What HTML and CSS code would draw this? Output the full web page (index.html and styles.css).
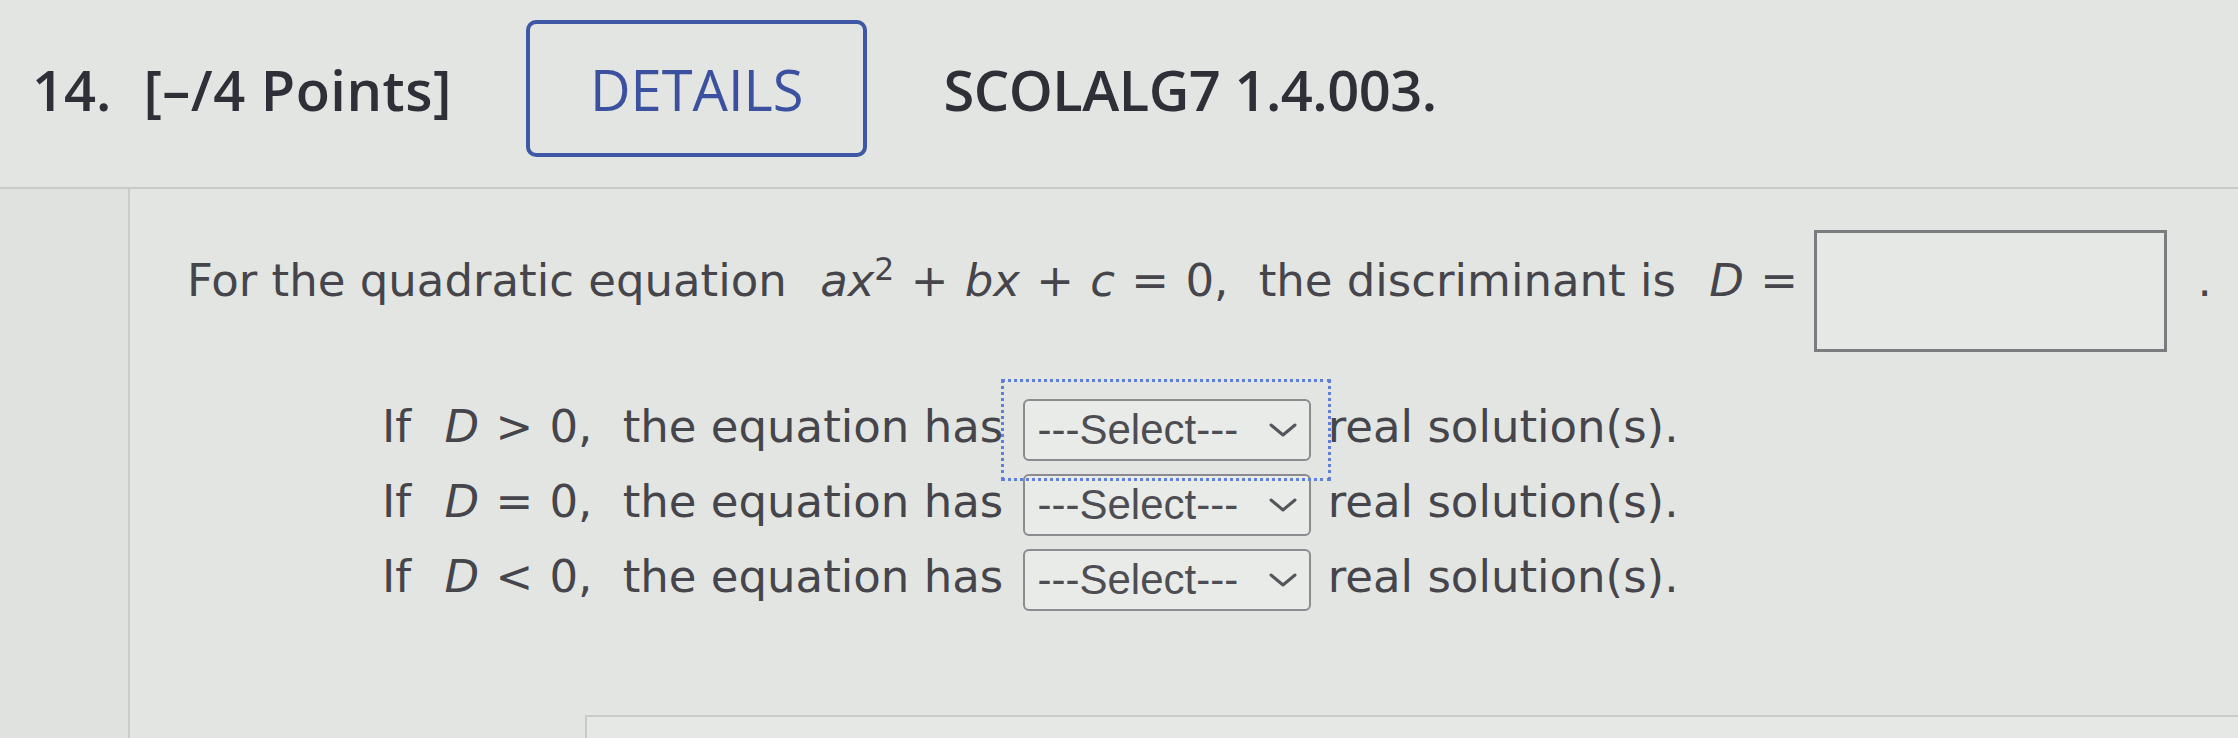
FILE: index.html
```html
<!DOCTYPE html>
<html>
	<head>
		<meta charset="utf-8">
		<title>SCOLALG7 1.4.003</title>
		<link rel="stylesheet" href="styles.css">
	</head>
	<body>
		<div class="question">
			<div class="qHead">
				<span class="qNum">14.</span>
				<span class="qPoints">[–/4 Points]</span>
				<button class="details" type="button">DETAILS</button>
				<span class="qCode">SCOLALG7 1.4.003.</span>
			</div>
			<div class="qBody">
				<div class="gutter"></div>
				<div class="qContent">
					<p class="lead">
						For the quadratic equation
						<span class="math"><i>a</i><i>x</i><sup>2</sup> <span class="op">+</span> <i>b</i><i>x</i> <span class="op">+</span> <i>c</i> <span class="op">=</span> 0,</span>
						the discriminant is
						<span class="math tail"><i>D</i> <span class="op">=</span></span>
						<span class="answer"></span>
						<span class="dot">.</span>
					</p>
					<ul class="cases">
						<li>
							If <span class="math"><i>D</i> <span class="op">&gt;</span> 0,</span> the equation has
							<span class="select focused">---Select--- <svg viewBox="0 0 28 14" width="28" height="14"><polyline points="2,2 14,12 26,2" /></svg></span>
							real solution(s).
						</li>
						<li>
							If <span class="math"><i>D</i> <span class="op">=</span> 0,</span> the equation has
							<span class="select">---Select--- <svg viewBox="0 0 28 14" width="28" height="14"><polyline points="2,2 14,12 26,2" /></svg></span>
							real solution(s).
						</li>
						<li>
							If <span class="math"><i>D</i> <span class="op">&lt;</span> 0,</span> the equation has
							<span class="select">---Select--- <svg viewBox="0 0 28 14" width="28" height="14"><polyline points="2,2 14,12 26,2" /></svg></span>
							real solution(s).
						</li>
					</ul>
					<div class="nextPart"></div>
				</div>
			</div>
		</div>
	</body>
</html>
```

FILE: styles.css
```css
* {
	margin: 0;
	padding: 0;
}

ul,
li {
	list-style: none;
}

html,
body {
	height: 100%;
	overflow: hidden;
}

body {
	background-color: #e3e5e2;
	font-family: "DejaVu Sans", Verdana, sans-serif;
	color: #45454b;
}

/* header row */
.qHead {
	display: flex;
	align-items: center;
	padding: 20px 0 30px 32px;
	border-bottom: 2px solid #c9cbc8;
	font-family: "Open Sans", "Noto Sans", sans-serif;
	font-size: 56px;
	font-weight: 600;
	color: #2f2f37;
}

.qHead .qNum {
	margin-right: 32px;
}

.qHead .qPoints {
	letter-spacing: 0.5px;
}

.qHead .details {
	box-sizing: border-box;
	height: 137px;
	margin: 0 76px 0 74px;
	padding: 0 60px;
	border: 4px solid #3e58a6;
	border-radius: 10px;
	background-color: transparent;
	font-family: "Open Sans", "Noto Sans", sans-serif;
	font-size: 56px;
	font-weight: 500;
	color: #3b51a0;
}

.qHead .qCode {
	letter-spacing: -0.5px;
}

/* body */
.qBody {
	display: flex;
	height: 560px;
}

.qBody .gutter {
	width: 128px;
	border-right: 2px solid #c9cbc8;
	background-color: #e0e2df;
}

.qBody .qContent {
	flex: 1;
	padding-left: 57px;
	font-size: 45px;
}

.math {
	margin: 0 16px 0 19px;
	font-style: normal;
}

.math.tail {
	margin-right: 0;
}

.math i {
	font-style: oblique;
}

.math .op {
	margin: 0 2px;
}

.math sup {
	font-size: 0.7em;
	line-height: 0;
	vertical-align: 0.5em;
}

.lead {
	margin-top: 41px;
	line-height: 52px;
	white-space: nowrap;
}

.lead .answer {
	display: inline-block;
	box-sizing: border-box;
	width: 353px;
	height: 122px;
	border: 3px solid #7b7b80;
	background-color: #e6e8e5;
	vertical-align: -56px;
}

.lead .dot {
	margin-left: 16px;
}

.cases {
	margin: 37px 0 0 195px;
}

.cases li {
	height: 75px;
	line-height: 75px;
	white-space: nowrap;
}

.select {
	display: inline-flex;
	align-items: center;
	justify-content: space-between;
	box-sizing: border-box;
	width: 288px;
	height: 62px;
	margin: 0 3px 0 5px;
	padding: 0 12px 0 13px;
	border: 2.5px solid #8b8b90;
	border-radius: 6px;
	background-color: #e9ebe8;
	font-family: "Liberation Sans", Arial, sans-serif;
	font-size: 42px;
	line-height: 1;
	color: #4d4d53;
	vertical-align: middle;
}

.select svg {
	fill: none;
	stroke: #55555b;
	stroke-width: 3;
	stroke-linecap: round;
	stroke-linejoin: round;
}

/* keyboard focus ring drawn over the first menu */
.select.focused {
	position: relative;
}

.select.focused::after {
	content: "";
	position: absolute;
	top: -22px;
	right: -22px;
	bottom: -22px;
	left: -24px;
	border: 3px dotted #5f80da;
	pointer-events: none;
}

.nextPart {
	height: 200px;
	margin: 101px 0 0 398px;
	border-top: 2px solid #c9cbc8;
	border-left: 2px solid #c9cbc8;
	background-color: #e6e8e5;
}
```
